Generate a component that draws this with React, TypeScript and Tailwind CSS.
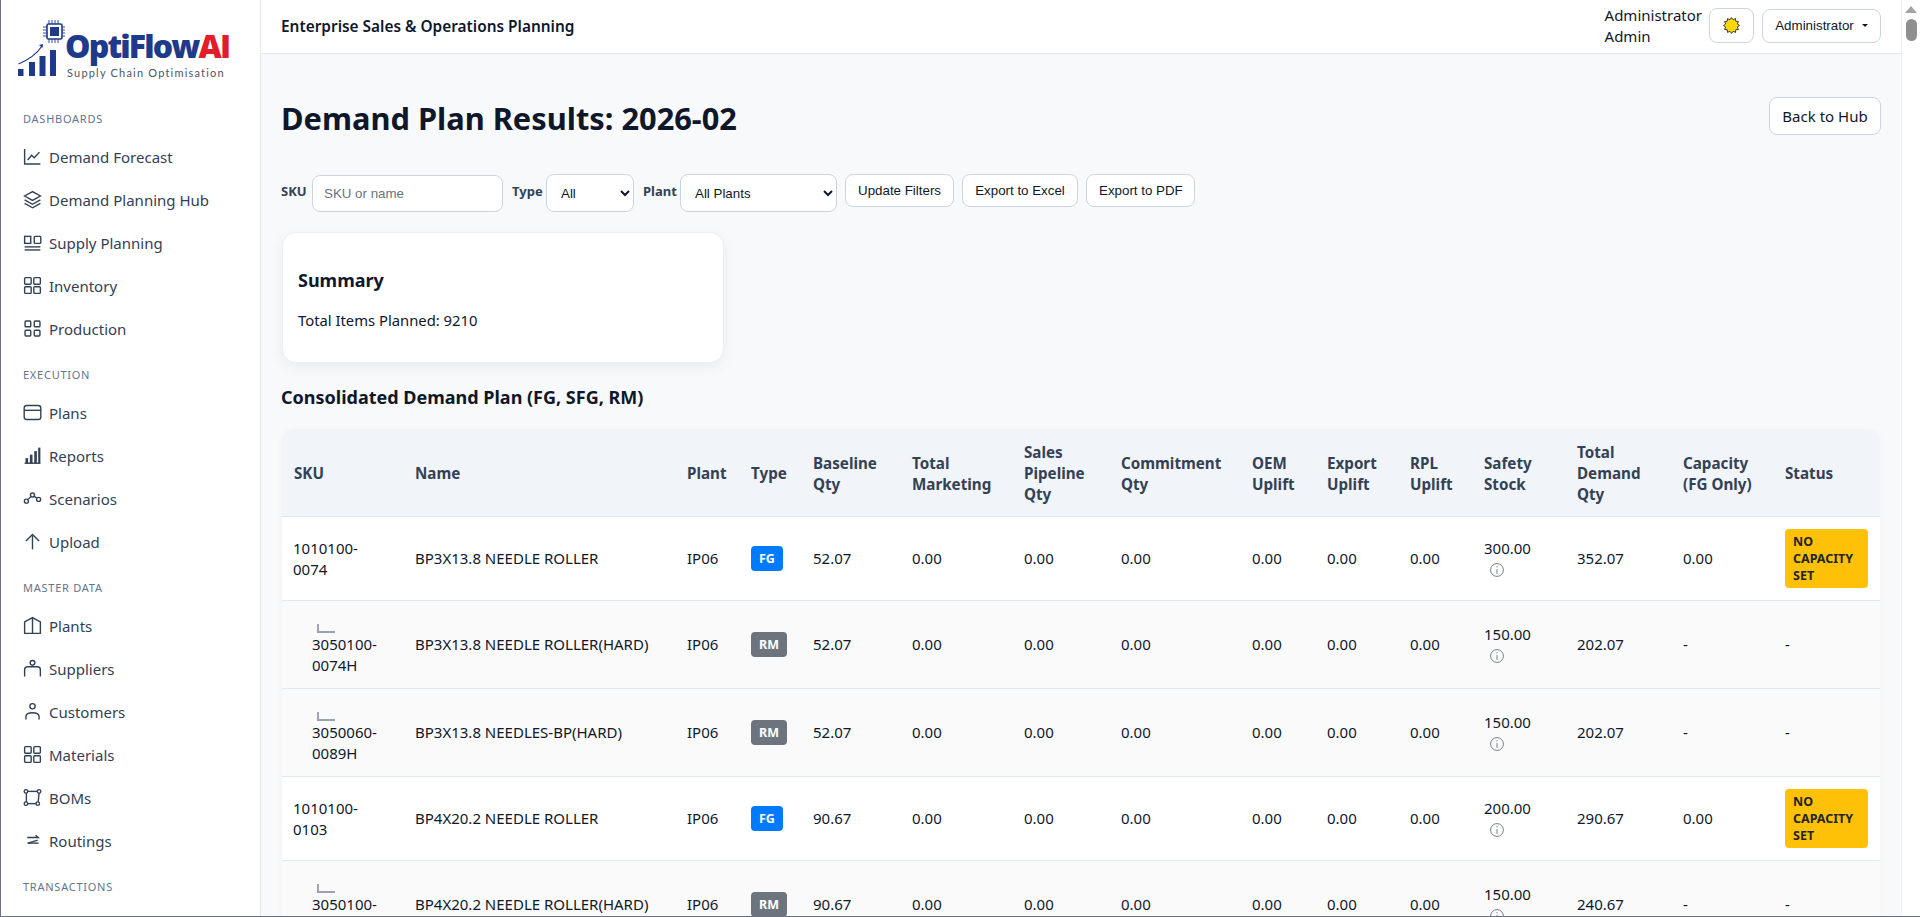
import { ReactNode } from 'react';

const icons: Record<string, ReactNode> = {
  forecast: (<><path d="M3 3.5V20.5H21" /><path d="M6.5 16L11 10.5L14 13.5L20 7" /></>),
  layers: (<><path d="M12 3L3 8L12 13L21 8Z" /><path d="M3 12.5L12 17.5L21 12.5" /><path d="M3 16.5L12 21.5L21 16.5" /></>),
  supply: (<><rect x="3" y="5" width="7" height="8" /><rect x="14" y="5" width="7.5" height="8" rx="1" /><path d="M3 17H21" /><path d="M3 20.5H21" /></>),
  grid: (<><rect x="3" y="3" width="7.5" height="7.5" rx="1" /><rect x="13.5" y="3" width="7.5" height="7.5" rx="1" /><rect x="3" y="13.5" width="7.5" height="7.5" rx="1" /><rect x="13.5" y="13.5" width="7.5" height="7.5" rx="1" /></>),
  gridSmall: (<><rect x="3.5" y="3.5" width="6.5" height="6.5" rx="1" /><rect x="14" y="3.5" width="6.5" height="6.5" rx="1" /><rect x="3.5" y="14" width="6.5" height="6.5" rx="1" /><rect x="14" y="14" width="6.5" height="6.5" rx="1" /></>),
  plans: (<><rect x="2.5" y="4" width="19" height="16" rx="3" /><path d="M2.5 9.5H21.5" /></>),
  reports: (
    <g fill="currentColor" stroke="none">
      <rect x="4" y="15" width="3" height="6" />
      <rect x="9" y="11" width="3" height="10" />
      <rect x="14" y="7" width="3" height="14" />
      <rect x="18.5" y="3" width="2.5" height="18" />
      <rect x="3" y="20" width="18" height="1.6" />
    </g>
  ),
  scenarios: (<><circle cx="5" cy="15" r="2.3" /><circle cx="12" cy="8" r="2.3" /><circle cx="19" cy="13" r="2.3" /><path d="M7 13L10 10" /><path d="M14 9.5L17 11.5" /></>),
  upload: (<><path d="M12 21V5" /><path d="M4.5 11.5L12 4L19.5 11.5" /></>),
  plants: (<><path d="M3 21V8L12 3L21 8V21Z" /><path d="M12 3V21" /></>),
  suppliers: (<><circle cx="12" cy="5.5" r="2.7" /><path d="M3 21V13.5C3 11 4.5 10 6.5 10H17.5C19.5 10 21 11 21 13.5V21" /></>),
  customers: (<><circle cx="12" cy="6" r="3" /><path d="M4.5 21V18C4.5 15 7 13.5 12 13.5C17 13.5 19.5 15 19.5 18V21" /></>),
  boms: (<><circle cx="4.5" cy="5" r="2" /><circle cx="19.5" cy="5" r="2" /><circle cx="4.5" cy="19" r="2" /><circle cx="18" cy="19" r="2" /><path d="M6.5 5H17.5" /><path d="M5 7V17" /><path d="M19.5 7L18.5 17" /><path d="M6.5 19H16" /></>),
  routings: (<><path d="M6 8.5H18.5L15.5 6" /><path d="M18 11.5L6.5 15" /><path d="M6.5 15H19" /></>),
};

function NavIcon({ name }: { name: string }) {
  return (
    <svg viewBox="0 0 24 24" fill="none" stroke="currentColor" strokeWidth="1.6" className="w-[21px] h-[21px] shrink-0 text-[#334155]">
      {icons[name]}
    </svg>
  );
}

const navGroups = [
  { label: 'Dashboards', items: [['Demand Forecast', 'forecast'], ['Demand Planning Hub', 'layers'], ['Supply Planning', 'supply'], ['Inventory', 'grid'], ['Production', 'gridSmall']] },
  { label: 'Execution', items: [['Plans', 'plans'], ['Reports', 'reports'], ['Scenarios', 'scenarios'], ['Upload', 'upload']] },
  { label: 'Master Data', items: [['Plants', 'plants'], ['Suppliers', 'suppliers'], ['Customers', 'customers'], ['Materials', 'grid'], ['BOMs', 'boms'], ['Routings', 'routings']] },
  { label: 'Transactions', items: [] as string[][] },
];

function Logo() {
  return (
    <div className="flex items-start h-[94px] pl-[17px] pt-[19px]">
      <svg viewBox="0 0 48 58" className="w-[48px] h-[58px] shrink-0 mr-[-1px]">
        <g fill="#1e3a8a">
          <rect x="0" y="50" width="5.5" height="7" />
          <rect x="11" y="43" width="6" height="14" />
          <rect x="21.5" y="37" width="6" height="20" />
          <rect x="32" y="31" width="6" height="26" />
        </g>
        <path d="M0.5 45C10 41 18 36 24 27" stroke="#1e3a8a" strokeWidth="1.2" fill="none" />
        <path d="M21 26L25 25L24.5 29Z" fill="#1e3a8a" />
        <rect x="29" y="5" width="15" height="15" rx="1.5" fill="none" stroke="#1e3a8a" strokeWidth="1.6" />
        <rect x="32" y="8" width="9" height="9" fill="#1e3a8a" />
        <path d="M31 1V5M34 1V5M37 1V5M40 1V5M31 20V24M34 20V24M37 20V24M40 20V24M25 8H29M25 11H29M25 14H29M25 17H29M44 8H47M44 11H47M44 14H47M44 17H47" stroke="#1e3a8a" strokeWidth="0.9" />
      </svg>
      <div className="flex flex-col font-['Open_Sans',sans-serif] pt-[8px]">
        <div className="text-[32px] leading-[38px] font-extrabold tracking-[-1.85px] text-[#1e3a8a] whitespace-nowrap">
          OptiFlow<span className="text-[#e11d2a]">AI</span>
        </div>
        <div className="text-[11px] leading-[16px] tracking-[1.2px] text-[#4b5563] whitespace-nowrap pl-[2px] font-['Lato',sans-serif]">
          Supply Chain Optimisation
        </div>
      </div>
    </div>
  );
}

function Sidebar() {
  return (
    <aside className="w-[259px] shrink-0 bg-white border-r border-[#e2e8f0] box-content overflow-hidden">
      <Logo />
      {navGroups.map((group) => (
        <div key={group.label}>
          <div className="pl-[22px] pt-[17px] pb-[8px] text-[11px] leading-[16px] uppercase tracking-[0.75px] text-[#64748b]">
            {group.label}
          </div>
          {group.items.map(([label, icon]) => (
            <div key={label} className="flex items-center gap-[6.5px] h-[43px] pl-[20.5px] text-[15px] text-[#334155]">
              <NavIcon name={icon} />
              <span className="mt-[1px]">{label}</span>
            </div>
          ))}
        </div>
      ))}
    </aside>
  );
}

// jagged sun outline for the theme toggle
const sunPoints = Array.from({ length: 24 }, (_, i) => {
  const a = (i * Math.PI) / 12;
  const r = i % 2 === 0 ? 8 : 6;
  return `${(8.5 + r * Math.cos(a)).toFixed(2)},${(8.5 + r * Math.sin(a)).toFixed(2)}`;
}).join(' ');

function Topbar() {
  return (
    <header className="h-[54px] shrink-0 bg-white border-b border-[#e2e8f0] flex items-center justify-between pl-[20px] pr-[20px]">
      <div className="text-[15.4px] font-semibold text-[#0f172a]">Enterprise Sales &amp; Operations Planning</div>
      <div className="flex items-center mb-[1.5px]">
        <div className="text-[15px] leading-[21px] text-[#0f172a] mr-[7px] mt-[1px]">
          <div>Administrator</div>
          <div>Admin</div>
        </div>
        <button className="w-[45px] h-[35px] bg-white border border-[#cbd5e1] rounded-[8px] flex items-center justify-center mr-[8px]">
          <svg viewBox="0 0 17 17" className="w-[17px] h-[17px]">
            <polygon fill="#ffd60a" stroke="#1f2937" strokeWidth="0.9" points={sunPoints} />
          </svg>
        </button>
        <button className="w-[119px] h-[34px] bg-white border border-[#cbd5e1] rounded-[8px] flex items-center justify-center gap-[8px] font-['Liberation_Sans',sans-serif] text-[13.33px] text-[#0f172a]">
          Administrator
          <span className="w-0 h-0 border-x-[3px] border-x-transparent border-t-[3px] border-t-[#0f172a]" />
        </button>
      </div>
    </header>
  );
}

const toolBtn = "h-[33px] px-[12px] bg-white border border-[#cbd5e1] rounded-[8px] font-['Liberation_Sans',sans-serif] text-[13.33px] text-[#0f172a] whitespace-nowrap";
const fieldCls = "h-[38px] bg-white border border-[#cbd5e1] rounded-[8px] font-['Liberation_Sans',sans-serif] text-[13.33px] text-[#0f172a]";

function Filters() {
  return (
    <div className="flex items-start">
      <label className="text-[13px] font-bold text-[#334155] w-[31px] leading-[35px]">SKU</label>
      <input placeholder="SKU or name" className={`${fieldCls} w-[191px] !h-[37px] px-[11px] placeholder:text-[#6b7280] mt-[1px]`} />
      <label className="text-[13px] font-bold text-[#334155] ml-[9px] w-[34px] leading-[35px]">Type</label>
      <select className={`${fieldCls} w-[88px] px-[10px]`}>
        <option>All</option>
      </select>
      <label className="text-[13px] font-bold text-[#334155] ml-[9px] w-[37px] leading-[35px]">Plant</label>
      <select className={`${fieldCls} w-[157px] px-[10px]`}>
        <option>All Plants</option>
      </select>
      <button className={`${toolBtn} ml-[8px] w-[109px]`}>Update Filters</button>
      <button className={`${toolBtn} ml-[8px] w-[116px]`}>Export to Excel</button>
      <button className={`${toolBtn} ml-[8px] w-[109px]`}>Export to PDF</button>
    </div>
  );
}

const headers = ['SKU', 'Name', 'Plant', 'Type', 'Baseline Qty', 'Total Marketing', 'Sales Pipeline Qty', 'Commitment Qty', 'OEM Uplift', 'Export Uplift', 'RPL Uplift', 'Safety Stock', 'Total Demand Qty', 'Capacity (FG Only)', 'Status'];
const colWidths = ['w-[121px]', 'w-[272px]', 'w-[64px]', 'w-[62px]', 'w-[99px]', 'w-[112px]', 'w-[97px]', 'w-[131px]', 'w-[75px]', 'w-[83px]', 'w-[74px]', 'w-[93px]', 'w-[106px]', 'w-[102px]', 'w-[107px]'];

const rows = [
  { sku: '1010100-0074', name: 'BP3X13.8 NEEDLE ROLLER', type: 'FG', base: '52.07', safety: '300.00', total: '352.07', capacity: '0.00' },
  { sku: '3050100-0074H', name: 'BP3X13.8 NEEDLE ROLLER(HARD)', type: 'RM', base: '52.07', safety: '150.00', total: '202.07', capacity: '-' },
  { sku: '3050060-0089H', name: 'BP3X13.8 NEEDLES-BP(HARD)', type: 'RM', base: '52.07', safety: '150.00', total: '202.07', capacity: '-' },
  { sku: '1010100-0103', name: 'BP4X20.2 NEEDLE ROLLER', type: 'FG', base: '90.67', safety: '200.00', total: '290.67', capacity: '0.00' },
  { sku: '3050100-0103H', name: 'BP4X20.2 NEEDLE ROLLER(HARD)', type: 'RM', base: '90.67', safety: '150.00', total: '240.67', capacity: '-' },
];

function InfoIcon() {
  return (
    <svg viewBox="0 0 14 14" fill="none" stroke="#6b7280" strokeWidth="0.9" className="inline-block w-[14px] h-[14px] ml-[6px] align-[-2px]">
      <circle cx="7" cy="7" r="6.4" />
      <path d="M7 6V11" />
      <path d="M7 3.2V4.4" />
    </svg>
  );
}

function PlanTable() {
  const td = 'px-[12px] py-[12px] align-middle border-b border-[#e2e8f0]';
  return (
    <table className="w-[1598px] ml-[1px] table-fixed border-separate border-spacing-0 text-[15px] leading-[21px] text-[#0f172a] rounded-[12px] shadow-[0_2px_8px_rgba(15,23,42,0.03)]">
      <colgroup>
        {colWidths.map((w, i) => (
          <col key={i} className={w} />
        ))}
      </colgroup>
      <thead>
        <tr className="bg-[#f1f4f9]">
          {headers.map((h, i) => (
            <th
              key={h}
              className={`${td} !pt-[13px] !pb-[11px] text-left text-[15.2px] font-bold text-[#334155] ${i === 0 ? 'rounded-tl-[12px]' : ''} ${i === headers.length - 1 ? 'rounded-tr-[12px]' : ''}`}
            >
              {h}
            </th>
          ))}
        </tr>
      </thead>
      <tbody>
        {rows.map((r) => {
          const isChild = r.type === 'RM';
          return (
            <tr key={r.sku} className={isChild ? 'bg-[#fafafa]' : 'bg-white'}>
              <td className={`${td} !pl-[11px]`}>
                {isChild ? (
                  <div className="pl-[19px]">
                    <div className="h-[21px] pl-[5px] pt-[11px]">
                      <div className="w-[18px] h-[9px] border-l-2 border-b-2 border-[#9ca3af]" />
                    </div>
                    {r.sku}
                  </div>
                ) : (
                  r.sku
                )}
              </td>
              <td className={`${td} whitespace-nowrap`}>{r.name}</td>
              <td className={td}>IP06</td>
              <td className={td}>
                <span className={`inline-block h-[25px] leading-[25px] px-[8px] rounded-[4px] text-white text-[12.5px] font-bold ${isChild ? 'bg-[#6c757d]' : 'bg-[#007bff]'}`}>
                  {r.type}
                </span>
              </td>
              <td className={td}>{r.base}</td>
              {[0, 1, 2, 3, 4, 5].map((n) => (
                <td key={n} className={td}>0.00</td>
              ))}
              <td className={td}>
                {r.safety}
                <br />
                <InfoIcon />
              </td>
              <td className={td}>{r.total}</td>
              <td className={td}>{r.capacity}</td>
              <td className={td}>
                {isChild ? (
                  '-'
                ) : (
                  <div className="w-[83px] rounded-[4px] bg-[#ffc107] text-[#212529] text-[12.5px] font-bold leading-[17px] px-[8px] py-[4px]">
                    NO CAPACITY SET
                  </div>
                )}
              </td>
            </tr>
          );
        })}
      </tbody>
    </table>
  );
}

export default function App() {
  return (
    <div className="h-[917px] flex overflow-hidden bg-white border-l border-b border-[#6b7280] font-['Noto_Sans',sans-serif]">
      <Sidebar />
      <div className="flex-1 min-w-0 flex flex-col overflow-hidden">
        <Topbar />
        <main className="flex-1 min-h-0 bg-[#f8f9fb] overflow-hidden pl-[20px] pr-[20px]">
          <div className="flex items-start justify-between h-[38px] mt-[45px]">
            <h1 className="text-[30.8px] leading-[38px] font-bold text-[#0f172a]">Demand Plan Results: 2026-02</h1>
            <button className="w-[112px] h-[38px] mt-[-2px] bg-white border border-[#cbd5e1] rounded-[8px] text-[15px] text-[#0f172a]">Back to Hub</button>
          </div>
          <div className="mt-[37px]">
            <Filters />
          </div>
          <section className="w-[442px] h-[131px] ml-[1px] mt-[20px] bg-white rounded-[14px] border border-[#eceff3] shadow-[0_4px_14px_rgba(15,23,42,0.06)] px-[15px] pt-[34px]">
            <h2 className="text-[18px] leading-[27px] font-bold text-[#0f172a]">Summary</h2>
            <p className="mt-[15px] text-[14.8px] leading-[22px] text-[#0f172a]">Total Items Planned: 9210</p>
          </section>
          <h3 className="text-[18px] leading-[27px] font-bold text-[#0f172a] mt-[21px] mb-[18px]">Consolidated Demand Plan (FG, SFG, RM)</h3>
          <PlanTable />
        </main>
      </div>
      <div className="w-[19px] shrink-0 bg-white flex flex-col items-center pt-[6px] border-l border-[#f1f1f1]">
        <span className="w-0 h-0 border-x-[6px] border-x-transparent border-b-[7px] border-b-[#a3a3a3]" />
        <span className="w-[11px] h-[22px] mt-[6px] rounded-full bg-[#8f8f8f]" />
      </div>
    </div>
  );
}
